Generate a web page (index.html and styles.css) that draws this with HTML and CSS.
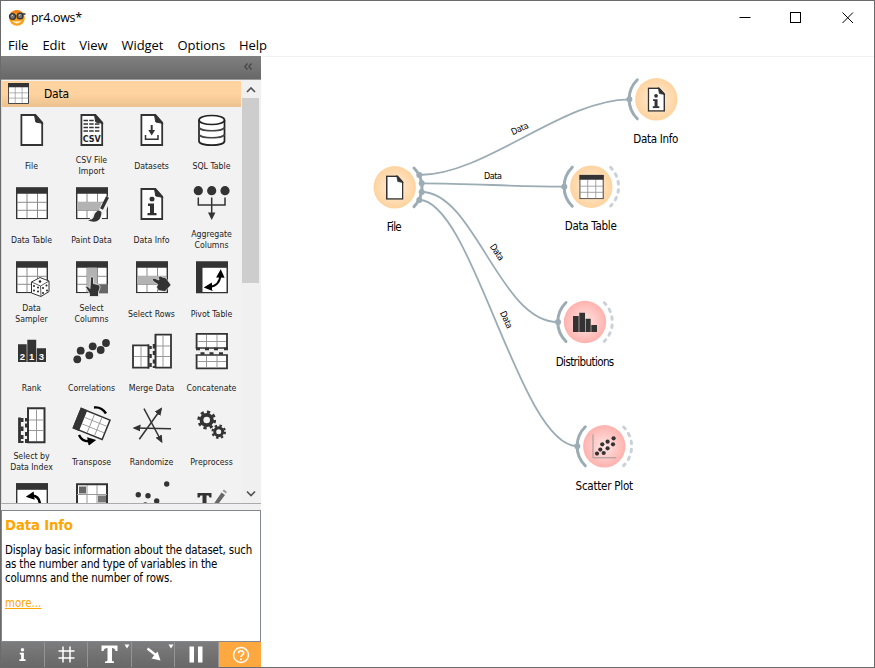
FILE: index.html
```html
<!DOCTYPE html>
<html lang="en">
<head>
    <meta charset="UTF-8">
    <title>pr4.ows*</title>
    <link rel="stylesheet" href="styles.css">
</head>
<body>
    <!-- shared shapes -->
    <svg class="defs" width="0" height="0">
        <defs>
            <symbol id="page" viewBox="0 0 23 32">
                <path d="M1 1H15L22 9V31H1Z" fill="#fff" stroke="#333" stroke-width="2"/>
                <path d="M14 0L23 9.500L15.500 8Z" fill="#333" stroke="#333"/>
            </symbol>
            <symbol id="table" viewBox="0 0 32 32">
                <path d="M.7.7H31.300V31.300H.7Z" fill="#fff" stroke="#333" stroke-width="1.400"/>
                <path d="M11 6V31M21.500 6V31M1 15H31M1 23H31" stroke="#8c8c8c" fill="none"/>
                <path d="M0 0H32V6.500H0Z" fill="#333"/>
            </symbol>
            <symbol id="info" viewBox="0 0 10 19">
                <circle cx="5" cy="2.500" r="2.500"/>
                <path d="M1 7H7V16.500H9.500V19H.5V16.500H3V9.500H1Z"/>
            </symbol>
            <marker id="tip" viewBox="0 0 8 8" refX="6" refY="4" markerWidth="8" markerHeight="8" markerUnits="userSpaceOnUse" orient="auto-start-reverse">
                <path d="M0 .5L8 4L0 7.500Z" fill="#333"/>
            </marker>
            <marker id="tipBlack" viewBox="0 0 8 8" refX="3" refY="4" markerWidth="8.500" markerHeight="8.500" markerUnits="userSpaceOnUse" orient="auto-start-reverse">
                <path d="M0 0L8 4L0 8Z" fill="#000"/>
            </marker>
            <radialGradient id="orange"><stop offset="0" stop-color="#ffeedb"/><stop offset="1" stop-color="#ffd39f"/></radialGradient>
            <radialGradient id="pink"><stop offset="0" stop-color="#ffe6e4"/><stop offset="1" stop-color="#ffb2ae"/></radialGradient>
        </defs>
    </svg>

    <div class="window">
        <header class="titlebar">
            <svg class="logo" width="18" height="18" viewBox="0 0 18 18">
                <circle cx="9" cy="9" r="7.800" fill="#f9a01b"/>
                <path d="M2 4Q9-2 15 4Z" fill="#f57f17"/>
                <path d="M4 12Q9 17 14 11.500Q9 13 4 12Z" fill="#fff3d0"/>
                <circle cx="4.500" cy="7.500" r="2.900" fill="#777" stroke="#333" stroke-width="1.400"/>
                <circle cx="12" cy="7" r="2.900" fill="#777" stroke="#333" stroke-width="1.400"/>
                <path d="M14 5L17.500 5" stroke="#333" stroke-width="1.500"/>
                <path d="M3.500 7L5 6M11 6.500L12.500 5.500" stroke="#ddd"/>
            </svg>
            <span class="title">pr4.ows*</span>
            <svg class="controls" width="120" height="14" viewBox="0 0 120 14">
                <path d="M.5 6.500H11.500" stroke="#000"/>
                <rect x="51.500" y="1.500" width="10" height="10" fill="none" stroke="#000"/>
                <path d="M103.500 1.500L114 12M114 1.500L103.500 12" stroke="#000"/>
            </svg>
        </header>
        <nav class="menubar">
            <span>File</span><span>Edit</span><span>View</span><span>Widget</span><span>Options</span><span>Help</span>
        </nav>

        <div class="main">
            <aside class="sidebar">
                <div class="dock-head">
                    <svg width="8" height="7" viewBox="0 0 8 7"><path d="M3.500.5L.8 3.500L3.500 6.500M7.500.5L4.800 3.500L7.500 6.500" fill="none" stroke="#444" stroke-width="1.200"/></svg>
                </div>

                <div class="toolbox">
                    <div class="toolbox-list">
                        <div class="category">
                            <svg width="21" height="21"><use href="#table"/></svg>
                            <span>Data</span>
                        </div>
                        <div class="grid">
                            <div class="item">
                                <svg viewBox="0 0 60 48"><use href="#page" x="18.300" y="7" width="23" height="32"/></svg>
                                <span>File</span>
                            </div>
                            <div class="item">
                                <svg viewBox="0 0 60 48"><use href="#page" x="18.300" y="7" width="23" height="32"/>
                                    <path d="M21.500 13.500H34M21.500 17H38M21.500 20.500H38M21.500 24H38" stroke="#333" stroke-width="1.500" stroke-dasharray="4.500 1.200"/>
                                    <text class="csv" x="29.700" y="35.200" textLength="18">CSV</text></svg>
                                <span>CSV File<br>Import</span>
                            </div>
                            <div class="item">
                                <svg viewBox="0 0 60 48"><use href="#page" x="18.300" y="7" width="23" height="32"/>
                                    <path d="M29.700 18V24" stroke="#333" stroke-width="2"/><path d="M26.300 23H33.100L29.700 28.500Z" fill="#333"/>
                                    <path d="M23.500 28V32.200H36V28" fill="none" stroke="#333" stroke-width="1.500"/></svg>
                                <span>Datasets</span>
                            </div>
                            <div class="item">
                                <svg viewBox="0 0 60 48"><g fill="#fff" stroke="#222" stroke-width="1.700">
                                    <path d="M17 13V34C17 39.500 42.500 39.500 42.500 34V13"/>
                                    <path d="M17 20C17 25 42.500 25 42.500 20M17 27C17 32 42.500 32 42.500 27" stroke="#444"/>
                                    <ellipse cx="29.750" cy="13" rx="12.750" ry="4.500"/></g></svg>
                                <span>SQL Table</span>
                            </div>

                            <div class="item">
                                <svg viewBox="0 0 60 48"><use href="#table" x="14" y="6.300" width="32" height="32"/></svg>
                                <span>Data Table</span>
                            </div>
                            <div class="item">
                                <svg viewBox="0 0 60 48"><use href="#table" x="14" y="6.300" width="32" height="32"/>
                                    <path d="M15.500 21H40L37 29H15.500Z" fill="#b3b3b3"/>
                                    <path d="M46.500 14L37 30L32 30L26 41L38 41L43 32L49 18Z" fill="#f2f2f2"/>
                                    <path d="M45.500 16L39.500 28" stroke="#333" stroke-width="3.200"/>
                                    <path d="M39.500 31.500C38 28 33 30 32 35C31 38.500 29 39 26 39C31 42 39 42 39.500 31.500Z" fill="#333"/></svg>
                                <span>Paint Data</span>
                            </div>
                            <div class="item">
                                <svg viewBox="0 0 60 48"><use href="#page" x="18.300" y="7" width="23" height="32"/><use href="#info" x="25" y="15.500" width="10" height="19" fill="#333"/></svg>
                                <span>Data Info</span>
                            </div>
                            <div class="item">
                                <svg viewBox="0 0 60 48"><g fill="#333"><circle cx="16.300" cy="9.700" r="4.600"/><circle cx="29.700" cy="9.700" r="4.600"/><circle cx="43" cy="9.700" r="4.600"/><path d="M26 31.500L29.700 39L33.400 31.500Z"/></g>
                                    <path d="M16.300 16.500V24H43V16.500M29.700 16.500V35" fill="none" stroke="#333" stroke-width="1.500"/></svg>
                                <span>Aggregate<br>Columns</span>
                            </div>

                            <div class="item">
                                <svg viewBox="0 0 60 48"><use href="#table" x="14" y="6.300" width="32" height="32"/>
                                    <path d="M38 22.500L47 26V36.500L39 41.500L29.500 38V27Z" fill="#fff" stroke="#333" stroke-linejoin="round"/>
                                    <path d="M29.500 27L38.500 31L47 26M38.500 31L39 41" fill="none" stroke="#333" stroke-width=".8"/>
                                    <g fill="#222"><circle cx="38" cy="26.500" r="1.300"/><circle cx="32" cy="31" r="1"/><circle cx="36" cy="36.500" r="1"/><circle cx="32" cy="35.500" r="1"/><circle cx="36" cy="32.500" r="1"/><circle cx="41" cy="33" r="1"/><circle cx="44.500" cy="30.500" r="1"/><circle cx="41" cy="38" r="1"/><circle cx="45" cy="35.500" r="1"/></g></svg>
                                <span>Data<br>Sampler</span>
                            </div>
                            <div class="item">
                                <svg viewBox="0 0 60 48"><use href="#table" x="14" y="6.300" width="32" height="32"/>
                                    <path d="M25 12.800H35V37H25Z" fill="#b3b3b3"/><path d="M36 29.500H46V38.300H36Z" fill="#666"/>
                                    <path d="M28.500 22.500C30 21 31.500 22 31.500 24V28.500L36 29.500Q38.500 30 38 33L36.500 37V41.500H27.500V38.500L23.500 32C24 30.500 26 31 28 33.500Z" fill="#333" stroke="#f2f2f2" stroke-width=".8"/></svg>
                                <span>Select<br>Columns</span>
                            </div>
                            <div class="item">
                                <svg viewBox="0 0 60 48"><use href="#table" x="14" y="6.300" width="32" height="32"/>
                                    <path d="M15.500 21H44.500V29H15.500Z" fill="#b3b3b3"/>
                                    <path d="M30.500 25C30 23.500 31.500 23 33 23.500L37 25L36.500 22.500C37.500 20.500 39 21 40 22L44 23L49 30L43 36.500L36.500 35.500L34.500 32L36 29.500L31.500 26.500Z" fill="#333" stroke="#f2f2f2" stroke-width=".6"/></svg>
                                <span>Select Rows</span>
                            </div>
                            <div class="item">
                                <svg viewBox="0 0 60 48"><path d="M14 6.300H46V38.300H14Z" fill="#333"/><path d="M20.500 12.800H44.500V37H20.500Z" fill="#fff"/>
                                    <path d="M27 32Q38 31 38.500 19.500" fill="none" stroke="#000" stroke-width="2" marker-start="url(#tipBlack)" marker-end="url(#tipBlack)"/></svg>
                                <span>Pivot Table</span>
                            </div>

                            <div class="item">
                                <svg viewBox="0 0 60 48"><path d="M16 15.300H24.700V33H16ZM25.300 10.700H34.200V33H25.300ZM34.800 19.300H44V33H34.800Z" fill="#333"/>
                                    <g class="rank"><text x="20.300" y="30.500">2</text><text x="29.700" y="30.500">1</text><text x="39.300" y="30.500">3</text></g></svg>
                                <span>Rank</span>
                            </div>
                            <div class="item">
                                <svg viewBox="0 0 60 48"><g fill="#333"><circle cx="15.300" cy="30.300" r="3.900"/><circle cx="18.700" cy="21.700" r="3.900"/><circle cx="27.300" cy="26.300" r="3.900"/><circle cx="30.700" cy="17.300" r="3.900"/><circle cx="38.700" cy="21" r="3.900"/><circle cx="44" cy="14" r="3.900"/></g></svg>
                                <span>Correlations</span>
                            </div>
                            <div class="item">
                                <svg viewBox="0 0 60 48"><g fill="#fff" stroke="#333" stroke-width="1.800"><path d="M27 16.300H11V38.700H27"/><path d="M33 5.700H49V38.700H33"/></g>
                                    <path d="M19 17V38M12 27.500H26M41 6.500V38M33 17H48M33 27.500H48" stroke="#999"/>
                                    <path d="M26.500 15.500V39.500M33.500 5V39" stroke="#333" stroke-width="2"/>
                                    <path d="M28.500 17V20M28.500 25V29M28.500 34V38M32 15V19.500M32 22V26M32 30.500V34.500M32 37V39" stroke="#333" stroke-width="2.500"/></svg>
                                <span>Merge Data</span>
                            </div>
                            <div class="item">
                                <svg viewBox="0 0 60 48"><g fill="#fff" stroke="#333" stroke-width="1.800"><path d="M14.600 19V4.900H45V19"/><path d="M14.600 26V39.400H45V26"/></g>
                                    <path d="M24.500 6V18M35 6V18M15.500 12.500H44M24.500 27V38.500M35 27V38.500M15.500 32.500H44" stroke="#999"/>
                                    <path d="M13.700 19H45.900M13.700 26H45.900" stroke="#333" stroke-width="1.400"/>
                                    <path d="M14 20H18M23 20H27M32 20H36M42 20H46M18.500 24.500H22.500M27.500 24.500H31.500M37 24.500H41" stroke="#333" stroke-width="2.600"/></svg>
                                <span>Concatenate</span>
                            </div>

                            <div class="item">
                                <svg viewBox="0 0 60 48"><path d="M17.500 14.500V40" stroke="#333" stroke-width="2.800"/><path d="M20 15V19M20 23.500V28M20 32V36M20 38V40" stroke="#333" stroke-width="3"/>
                                    <path d="M26 5.300H42.500V39.300H26Z" fill="#fff" stroke="#333" stroke-width="2"/>
                                    <path d="M34.500 6.500V38M27 17H41.500M27 27.500H41.500" stroke="#999"/><path d="M25 15V18.500M25 20.500V24.500M25 29V33M25 36V40" stroke="#333" stroke-width="4"/></svg>
                                <span>Select by<br>Data Index</span>
                            </div>
                            <div class="item">
                                <svg viewBox="0 0 60 48"><g transform="translate(29.700 21) rotate(22)">
                                    <path d="M-15.500-10.500H15.500V10.500H-15.500Z" fill="#fff" stroke="#333" stroke-width="1.500"/><path d="M-16.200-11.200H-9.200V11.200H-16.200Z" fill="#333"/>
                                    <path d="M-1-10V10M7-10V10M-9-3.500H15M-9 3.500H15" stroke="#999"/></g>
                                    <path d="M44 10.500Q39.500 3.500 32 4.500M17 32Q20.500 39.500 29 38" fill="none" stroke="#000" stroke-width="2.400" marker-end="url(#tipBlack)"/></svg>
                                <span>Transpose</span>
                            </div>
                            <div class="item">
                                <svg viewBox="0 0 60 48"><g stroke="#333" stroke-width="1.500">
                                    <path d="M22 5.700L39.500 38.500" marker-end="url(#tip)"/>
                                    <path d="M17.300 36.300L39 6" marker-end="url(#tip)"/>
                                    <path d="M49 25.700L12.500 25" marker-end="url(#tip)"/></g></svg>
                                <span>Randomize</span>
                            </div>
                            <div class="item">
                                <svg viewBox="0 0 60 48"><g fill="none" stroke="#333">
                                    <circle cx="24.700" cy="17" r="5.200" stroke-width="3.800"/><circle cx="24.700" cy="17" r="8" stroke-width="2.800" stroke-dasharray="3.142 3.142"/>
                                    <circle cx="36.700" cy="28.700" r="4" stroke-width="3"/><circle cx="36.700" cy="28.700" r="6.200" stroke-width="2.200" stroke-dasharray="2.435 2.435"/></g></svg>
                                <span>Preprocess</span>
                            </div>

                            <div class="item">
                                <svg viewBox="0 0 60 48"><path d="M14.700 7H45.300V38H14.700Z" fill="#fff" stroke="#333" stroke-width="1.400"/><path d="M14 6.300H46V12.800H14Z" fill="#333"/>
                                    <path d="M38 27Q37 18 29 19" fill="none" stroke="#000" stroke-width="2.600" marker-end="url(#tipBlack)"/></svg>
                            </div>
                            <div class="item">
                                <svg viewBox="0 0 60 48"><path d="M15 7.300H45V38H15Z" fill="#fff" stroke="#333" stroke-width="2"/><path d="M25 8V38M35 8V38M15 17.500H45" stroke="#999"/>
                                    <path d="M17 9.500H24V16.500H17Z" fill="#666"/><path d="M36 18.500H44V25.500H36Z" fill="#777"/></svg>
                            </div>
                            <div class="item">
                                <svg viewBox="0 0 60 48"><g fill="#333"><circle cx="16.300" cy="17.700" r="2.700"/><circle cx="26" cy="18.700" r="2.700"/><circle cx="34.700" cy="24" r="2.700"/><circle cx="44.700" cy="7" r="2.700"/><circle cx="23.300" cy="28" r="2.700"/></g></svg>
                            </div>
                            <div class="item">
                                <svg viewBox="0 0 60 48"><path d="M15.500 16H29.500V20.500H27.500L26.500 18.500H24.500V32H20.500V18.500H18.500L17.500 20.500H15.500Z" fill="#333"/>
                                    <path d="M39.500 15.500L43 18L34 30L31 28Z" fill="#666"/><path d="M40.500 14L42 12.500L45 15L44 16.500Z" fill="#999"/></svg>
                            </div>
                        </div>
                    </div>
                    <div class="scrollbar">
                        <svg width="18" height="17" viewBox="0 0 18 17"><path d="M5 11L9 7L13 11" fill="none" stroke="#505050" stroke-width="1.600"/></svg>
                        <div class="thumb"></div>
                        <svg width="18" height="17" viewBox="0 0 18 17"><path d="M5 5.500L9 9.500L13 5.500" fill="none" stroke="#505050" stroke-width="1.600"/></svg>
                    </div>
                </div>

                <section class="help">
                    <h3>Data Info</h3>
                    <p>Display basic information about the dataset, such<br>as the number and type of variables in the<br>columns and the number of rows.</p>
                    <a>more...</a>
                </section>

                <div class="toolbar">
                    <div class="tool"><svg viewBox="0 0 43 25"><use href="#info" x="18" y="6" width="7" height="13" fill="#fff"/></svg></div>
                    <div class="tool"><svg viewBox="0 0 43 25"><path d="M18 4.500V20.500M25 4.500V20.500M13.500 9H29.500M13.500 16H29.500" stroke="#fff" stroke-width="1.500"/></svg></div>
                    <div class="tool"><svg viewBox="0 0 43 25"><path d="M13.500 3.500H29.500V9H27.500Q27 6 24 6V18.500Q24 19.500 26 19.500V21H17V19.500Q19.500 19.500 19.500 18.500V6Q16 6 15.500 9H13.500Z" fill="#fff"/><path d="M36.500 2.500H41.500L39 6.500Z" fill="#fff"/></svg></div>
                    <div class="tool"><svg viewBox="0 0 43 25"><path d="M15.500 6.500L25 14" stroke="#fff" stroke-width="2.400"/><path d="M28.500 18.500L19.500 16.500L25.500 9.500Z" fill="#fff"/><path d="M36.500 2.500H41.500L39 6.500Z" fill="#fff"/></svg></div>
                    <div class="tool"><svg viewBox="0 0 43 25"><path d="M14.500 4.500H19V20.500H14.500ZM23 4.500H27.500V20.500H23Z" fill="#fff"/></svg></div>
                    <div class="tool active"><svg viewBox="0 0 43 25"><circle cx="22" cy="13" r="7.500" fill="none" stroke="#fff" stroke-width="1.400"/>
                        <path d="M19.500 11.300C19.500 8 24.700 8 24.700 11C24.700 13 22 12.800 22 15" fill="none" stroke="#fff" stroke-width="1.500"/><circle cx="22" cy="17.200" r="1" fill="#fff"/></svg></div>
                </div>
            </aside>

            <svg class="canvas" width="612" height="611" viewBox="262 56 612 611">
                <path d="M262 56.500H874" stroke="#f0f0f0"/>
                <g class="links">
                    <path d="M419.300 175C485 175 563 99.300 629.300 99.300"/>
                    <path d="M421.700 183.300C475 183.300 510 186.700 564 186.700"/>
                    <path d="M421.700 192C474 192 500 322 557.700 322"/>
                    <path d="M419.300 200C472 200 520 446 577 446"/>
                </g>
                <g class="link-text">
                    <text transform="translate(521 131.500) rotate(-24)" textLength="18">Data</text>
                    <text x="493" y="179" textLength="18">Data</text>
                    <text transform="translate(494.500 254) rotate(56)" textLength="18">Data</text>
                    <text transform="translate(503.500 321) rotate(66)" textLength="18">Data</text>
                </g>

                <g transform="translate(394.700 187.300)">
                    <circle r="21.200" fill="url(#orange)"/>
                    <path class="anchor" d="M19.300-19.300A27.300 27.300 0 0 1 19.300 19.300"/>
                    <g class="dots"><circle cx="24.600" cy="-12.300" r="3"/><circle cx="27" cy="-4" r="3"/><circle cx="27" cy="4.700" r="3"/><circle cx="24.600" cy="12.700" r="3"/></g>
                    <use href="#page" x="-8.700" y="-12" width="17.500" height="24.500"/>
                    <text class="name" x="-.5" y="43.500" textLength="15">File</text>
                </g>
                <g transform="translate(656.300 99.300)">
                    <circle r="21.200" fill="url(#orange)"/>
                    <path class="anchor" d="M-19-19.500A27.300 27.300 0 0 0-19 19.500"/><circle class="dots" cx="-27" r="3"/>
                    <use href="#page" x="-8.700" y="-12" width="17.500" height="24.500"/><use href="#info" x="-4" y="-5.500" width="7.500" height="14.500" fill="#333"/>
                    <text class="name" x="-.5" y="43.500" textLength="45">Data Info</text>
                </g>
                <g transform="translate(591.300 186.700)">
                    <circle r="21.200" fill="url(#orange)"/>
                    <path class="anchor" d="M-19-19.500A27.300 27.300 0 0 0-19 19.500"/><circle class="dots" cx="-27" r="3"/>
                    <path class="anchor open" d="M19.300-19.300A27.300 27.300 0 0 1 19.300 19.300"/>
                    <use href="#table" x="-12" y="-12" width="24.500" height="24.500"/>
                    <text class="name" x="-.5" y="43.500" textLength="52">Data Table</text>
                </g>
                <g transform="translate(585 322)">
                    <circle r="21.200" fill="url(#pink)"/>
                    <path class="anchor" d="M-19-19.500A27.300 27.300 0 0 0-19 19.500"/><circle class="dots" cx="-27" r="3"/>
                    <path class="anchor open" d="M19.300-19.300A27.300 27.300 0 0 1 19.300 19.300"/>
                    <path d="M-12-6H-6.300V10H-12ZM-5.700-9.300H0V10H-5.700ZM.6-3.300H5.700V10H.6ZM6.300 3H12V10H6.300Z" fill="#333"/>
                    <text class="name" y="43.500" textLength="58.500">Distributions</text>
                </g>
                <g transform="translate(604.300 446.300)">
                    <circle r="21.200" fill="url(#pink)"/>
                    <path class="anchor" d="M-19-19.500A27.300 27.300 0 0 0-19 19.500"/><circle class="dots" cx="-27" r="3"/>
                    <path class="anchor open" d="M19.300-19.300A27.300 27.300 0 0 1 19.300 19.300"/>
                    <path d="M-11.300-12V11.500H12" fill="none" stroke="#999"/>
                    <g fill="#333"><circle cx="-7.300" cy="7.300" r="2.100"/><circle cx="-4" cy="3.300" r="2.100"/><circle cx="-2" cy="-2" r="2.100"/><circle cx="-.6" cy="6.700" r="2.100"/><circle cx="3.300" cy="2" r="2.100"/><circle cx="3.300" cy="-4.600" r="2.100"/><circle cx="8.700" cy="-2" r="2.100"/><circle cx="9.300" cy="-8" r="2.100"/></g>
                    <text class="name" y="43.500" textLength="57.500">Scatter Plot</text>
                </g>
            </svg>
        </div>
    </div>
</body>
</html>
```
FILE: styles.css
```css
* {
    box-sizing: border-box;
}
body {
    margin: 0;
    font-family: "DejaVu Sans Condensed", "DejaVu Sans", sans-serif;
    font-stretch: condensed;
    color: #000;
}
svg {
    display: block;
    flex: none;
}
.defs {
    position: absolute;
}
.window {
    width: 875px;
    height: 668px;
    border: 1px solid #6b6b6b;
    background: #fff;
    display: flex;
    flex-direction: column;
    overflow: hidden;
}
.titlebar {
    height: 33px;
    display: flex;
    align-items: center;
    padding: 0 15px 0 7px;
    font-family: "Open Sans", sans-serif;
    font-stretch: normal;
    font-size: 12.5px;
}
.title {
    margin-left: 5px;
    letter-spacing: -0.3px;
}
.controls {
    margin-left: auto;
}
.menubar {
    height: 22px;
    display: flex;
    gap: 14px;
    padding-left: 7px;
    line-height: 23px;
    font-family: "Open Sans", sans-serif;
    font-stretch: normal;
    font-size: 13px;
    letter-spacing: -0.05px;
}
.main {
    flex: 1;
    display: flex;
    min-height: 0;
}
.sidebar {
    width: 260px;
    flex: none;
    display: flex;
    flex-direction: column;
    background: #f0f0f0;
}
.dock-head {
    height: 24px;
    flex: none;
    background: linear-gradient(#808080, #686868);
    border-bottom: 1px solid #999;
    display: flex;
    justify-content: flex-end;
    padding: 7px 9px 0 0;
}
.toolbox {
    height: 424px;
    flex: none;
    display: flex;
    border-left: 1px solid #ddd;
    border-bottom: 1px solid #aaa;
}
.toolbox-list {
    width: 239px;
    overflow: hidden;
    background: #f2f2f2;
}
.category {
    height: 26px;
    margin-top: 1px;
    display: flex;
    align-items: center;
    padding: 0 0 1px 6px;
    gap: 15px;
    background: linear-gradient(#ffd39f 50%, #eac18f);
    font-size: 12px;
    letter-spacing: -0.2px;
}
.grid {
    display: grid;
    grid-template-columns: repeat(4, 60px);
    grid-auto-rows: 74px;
}
.item {
    display: flex;
    flex-direction: column;
    align-items: center;
    font-size: 8.7px;
    line-height: 10.7px;
    text-align: center;
    white-space: nowrap;
    color: #222;
}
.item svg {
    width: 60px;
    height: 48px;
}
.item span {
    height: 22px;
    display: flex;
    align-items: center;
    margin-left: -1px;
}
.csv {
    font: bold 8px "DejaVu Sans", sans-serif;
    text-anchor: middle;
    fill: #222;
}
.rank {
    font: bold 9.5px "Liberation Sans", sans-serif;
    text-anchor: middle;
    fill: #fff;
}
.scrollbar {
    width: 18px;
    margin-left: 1px;
    display: flex;
    flex-direction: column;
    padding-top: 1px;
    background: #f0f0f0;
}
.thumb {
    height: 185px;
    width: 17px;
    margin-bottom: auto;
    background: #cdcdcd;
}
.help {
    height: 132px;
    flex: none;
    margin-top: 6px;
    border: 1px solid #828790;
    background: #fff;
    padding: 4px 3px;
    font-size: 11.4px;
    letter-spacing: -0.17px;
}
.help h3 {
    margin: 0 0 9px;
    font-size: 14.8px;
    line-height: 19px;
    color: #ffa500;
}
.help p {
    margin: 0 0 11px;
    line-height: 14px;
    white-space: nowrap;
}
.help a {
    display: block;
    line-height: 14px;
    color: #ffa500;
    text-decoration: underline;
    letter-spacing: 0;
}
.toolbar {
    flex: 1;
    display: flex;
    background: linear-gradient(#7c7c7c, #686868);
}
.tool {
    flex: 1;
    min-width: 0;
    border-right: 1px solid #949494;
}
.tool svg {
    width: 43px;
    height: 25px;
}
.tool.active {
    background: #ffa840;
    border: none;
}
.canvas {
    margin-left: 1px;
}
.links path {
    fill: none;
    stroke: #9cacb4;
    stroke-width: 1.8;
}
.anchor {
    fill: none;
    stroke: #9cacb4;
    stroke-width: 3;
    stroke-linecap: round;
}
.open {
    stroke: #c9d2d7;
    stroke-dasharray: 2.5 5.6;
}
.dots {
    fill: #9cacb4;
}
.link-text {
    font-size: 9px;
    text-anchor: middle;
}
.name {
    font-size: 11.5px;
    text-anchor: middle;
}
```
